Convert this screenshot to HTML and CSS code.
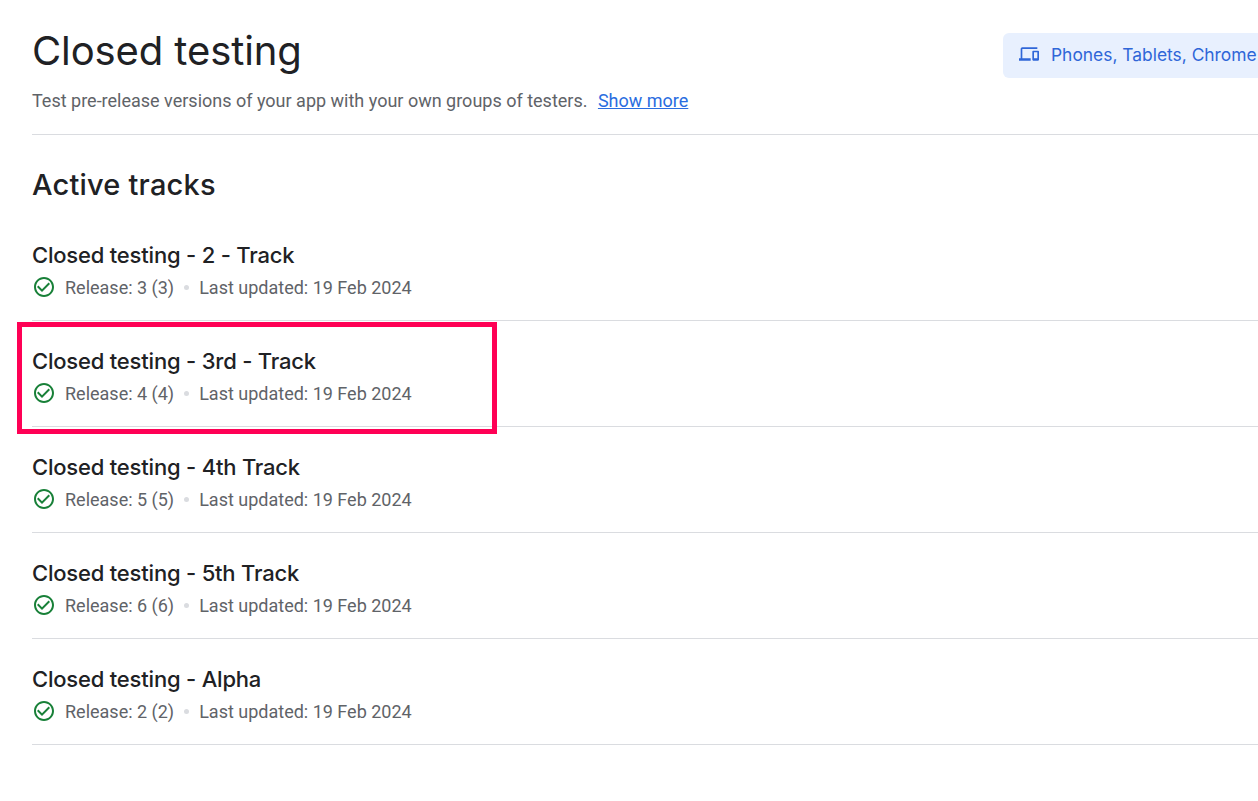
FILE: index.html
```html
<!DOCTYPE html>
<html lang="en">
<head>
  <meta charset="UTF-8" />
  <title>Closed testing</title>
  <link rel="stylesheet" href="styles.css">
</head>
<body>
  <div class="page">
    <header class="header">
      <div class="header-text">
        <h1>Closed testing</h1>
        <p class="desc">Test pre-release versions of your app with your own groups of testers. <a href="#">Show more</a></p>
      </div>
      <div class="chip">
        <svg class="chip-icon" viewBox="0 0 24 24"><path d="M4 6h18V4H4c-1.1 0-2 .9-2 2v11H0v3h14v-3H4V6zm19 2h-6c-.55 0-1 .45-1 1v10c0 .55.45 1 1 1h6c.55 0 1-.45 1-1V9c0-.55-.45-1-1-1zm-1 9h-4v-7h4v7z"/></svg>
        <span>Phones, Tablets, Chrome</span>
      </div>
    </header>

    <h2>Active tracks</h2>

    <div class="tracks">
      <div class="track">
        <h3>Closed testing - 2 - Track</h3>
        <div class="meta">
          <svg class="ok" viewBox="0 0 24 24"><path d="M16.59 7.58L10 14.17l-3.59-3.58L5 12l5 5 8-8zM12 2C6.48 2 2 6.48 2 12s4.48 10 10 10 10-4.48 10-10S17.52 2 12 2zm0 18c-4.42 0-8-3.58-8-8s3.58-8 8-8 8 3.58 8 8-3.58 8-8 8z"/></svg>
          <span>Release: 3 (3)</span><i class="dot"></i><span>Last updated: 19 Feb 2024</span>
        </div>
      </div>
      <div class="track">
        <h3>Closed testing - 3rd - Track</h3>
        <div class="meta">
          <svg class="ok" viewBox="0 0 24 24"><path d="M16.59 7.58L10 14.17l-3.59-3.58L5 12l5 5 8-8zM12 2C6.48 2 2 6.48 2 12s4.48 10 10 10 10-4.48 10-10S17.52 2 12 2zm0 18c-4.42 0-8-3.58-8-8s3.58-8 8-8 8 3.58 8 8-3.58 8-8 8z"/></svg>
          <span>Release: 4 (4)</span><i class="dot"></i><span>Last updated: 19 Feb 2024</span>
        </div>
        <div class="highlight"></div>
      </div>
      <div class="track">
        <h3>Closed testing - 4th Track</h3>
        <div class="meta">
          <svg class="ok" viewBox="0 0 24 24"><path d="M16.59 7.58L10 14.17l-3.59-3.58L5 12l5 5 8-8zM12 2C6.48 2 2 6.48 2 12s4.48 10 10 10 10-4.48 10-10S17.52 2 12 2zm0 18c-4.42 0-8-3.58-8-8s3.58-8 8-8 8 3.58 8 8-3.58 8-8 8z"/></svg>
          <span>Release: 5 (5)</span><i class="dot"></i><span>Last updated: 19 Feb 2024</span>
        </div>
      </div>
      <div class="track">
        <h3>Closed testing - 5th Track</h3>
        <div class="meta">
          <svg class="ok" viewBox="0 0 24 24"><path d="M16.59 7.58L10 14.17l-3.59-3.58L5 12l5 5 8-8zM12 2C6.48 2 2 6.48 2 12s4.48 10 10 10 10-4.48 10-10S17.52 2 12 2zm0 18c-4.42 0-8-3.58-8-8s3.58-8 8-8 8 3.58 8 8-3.58 8-8 8z"/></svg>
          <span>Release: 6 (6)</span><i class="dot"></i><span>Last updated: 19 Feb 2024</span>
        </div>
      </div>
      <div class="track">
        <h3>Closed testing - Alpha</h3>
        <div class="meta">
          <svg class="ok" viewBox="0 0 24 24"><path d="M16.59 7.58L10 14.17l-3.59-3.58L5 12l5 5 8-8zM12 2C6.48 2 2 6.48 2 12s4.48 10 10 10 10-4.48 10-10S17.52 2 12 2zm0 18c-4.42 0-8-3.58-8-8s3.58-8 8-8 8 3.58 8 8-3.58 8-8 8z"/></svg>
          <span>Release: 2 (2)</span><i class="dot"></i><span>Last updated: 19 Feb 2024</span>
        </div>
      </div>
    </div>
  </div>
</body>
</html>
```

FILE: styles.css
```css
* { box-sizing: border-box; margin: 0; padding: 0; }
html, body {
  height: 100%;
  overflow: hidden;
  background: #fff;
}
body {
  font-family: Roboto, sans-serif;
  color: #202124;
}
.page {
  width: 1500px;
  margin-left: 32px;
}
.header {
  display: grid;
  grid-template-columns: 971px 400px;
  justify-content: start;
  align-items: start;
  height: 135px;
  padding-top: 26px;
  border-bottom: 1px solid #dadce0;
}
h1 {
  font-family: Inter, sans-serif;
  font-size: 40px;
  font-weight: 400;
  line-height: 50px;
  letter-spacing: -0.1px;
}
.desc {
  margin-top: 13px;
  font-size: 18px;
  line-height: 24px;
  color: #5f6368;
}
.desc a {
  margin-left: 6px;
  color: #2a6de0;
}
.chip {
  display: flex;
  align-items: center;
  gap: 12px;
  height: 45px;
  margin-top: 7px;
  padding: 0 16px 2px;
  border-radius: 6px;
  background: #e8f0fe;
  color: #2f66d8;
  font-family: Inter, sans-serif;
  font-size: 17.4px;
}
.chip-icon {
  width: 20px;
  height: 20px;
  margin-bottom: 2px;
  fill: #2f66d8;
}
h2 {
  margin-top: 31px;
  font-family: Inter, sans-serif;
  font-size: 29px;
  font-weight: 500;
  line-height: 38px;
  letter-spacing: 0.2px;
}
.tracks {
  margin-top: 11px;
}
.track {
  position: relative;
  height: 106px;
  padding-top: 25px;
  border-bottom: 1px solid #dadce0;
}
h3 {
  font-family: Inter, sans-serif;
  font-size: 22px;
  font-weight: 500;
  line-height: 30px;
  letter-spacing: -0.2px;
}
.meta {
  display: flex;
  align-items: center;
  height: 24px;
  margin-top: 5px;
  font-size: 18px;
  color: #5f6368;
}
.ok {
  width: 24px;
  height: 24px;
  margin-right: 9px;
  fill: #188038;
}
.dot {
  width: 5px;
  height: 5px;
  margin: 0 10px;
  border-radius: 50%;
  background: #dadce0;
}
.highlight {
  position: absolute;
  top: 1px;
  left: -15px;
  width: 480px;
  height: 112px;
  border: 5px solid #ff0055;
}
```
